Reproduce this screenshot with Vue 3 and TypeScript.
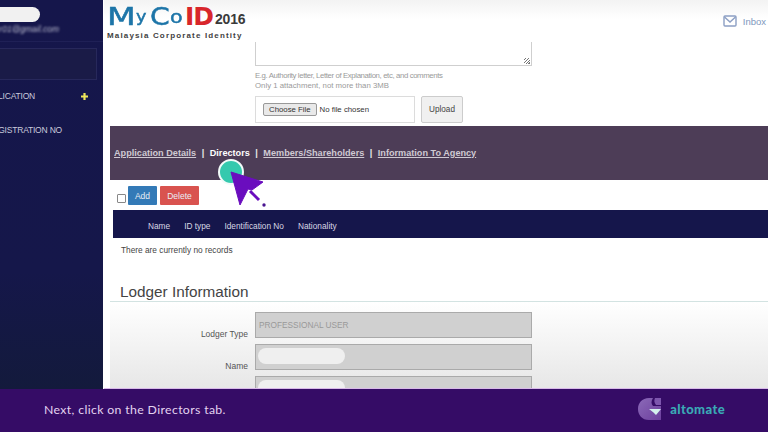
<script setup lang="ts">
const links = ['Application Details', 'Directors', 'Members/Shareholders', 'Information To Agency']
const columns = ['Name', 'ID type', 'Identification No', 'Nationality']
</script>

<template>
  <div class="screen">
    <div class="main">
      <aside class="sidebar">
        <div class="user">
          <div class="user-pill"></div>
          <div class="user-mail"><span>someuser01@gmail.com</span></div>
        </div>
        <div class="side-box"></div>
        <div class="side-row first">
          <div class="cut cut-a"><span>APPLICATION</span></div>
          <svg class="plus" width="7" height="7" viewBox="0 0 7 7"><path d="M3.500 0V7M0 3.500H7" stroke="#efe65a" stroke-width="2.200" /></svg>
        </div>
        <div class="side-row second"><div class="cut cut-b"><span>REGISTRATION NO</span></div></div>
      </aside>

      <section class="page">
        <header class="top">
          <div class="logo">
            <div class="logo-mark">
              <span class="m">M</span><span class="y">y</span><span class="c">C</span><span class="o">o</span><span class="id">ID</span><span class="year">2016</span>
            </div>
            <div class="logo-sub">Malaysia Corporate Identity</div>
          </div>
          <div class="inbox">
            <svg width="14" height="12" viewBox="0 0 14 12" fill="none" stroke="#8c9fc4" stroke-width="1.400">
              <rect x="1" y="1" width="12" height="10" rx="1" />
              <path d="M1.500 2 7 7 12.500 2" />
            </svg>
            <span>Inbox</span>
          </div>
        </header>

        <div class="upload">
          <div class="textarea"><span class="grip"></span></div>
          <p class="hint"><span class="hint-a">E.g. Authority letter, Letter of Explanation, etc, and comments</span><br />Only 1 attachment, not more than 3MB</p>
          <div class="file-row">
            <div class="file-box"><span class="choose">Choose File</span><span class="nofile">No file chosen</span></div>
            <div class="upload-btn">Upload</div>
          </div>
        </div>

        <nav class="tabs">
          <template v-for="(l, i) in links" :key="l">
            <span v-if="i" class="sep">|</span>
            <span :class="['tab', { active: l === 'Directors' }]">{{ l }}</span>
          </template>
        </nav>

        <div class="actions">
          <span class="check"></span>
          <span class="btn add">Add</span>
          <span class="btn del">Delete</span>
        </div>

        <div class="thead">
          <span v-for="c in columns" :key="c">{{ c }}</span>
        </div>
        <p class="empty">There are currently no records</p>

        <div class="lodger">
          <h2>Lodger Information</h2>
          <div class="form">
            <div class="row">
              <label>Lodger Type</label>
              <div class="field"><span class="value">PROFESSIONAL USER</span></div>
            </div>
            <div class="row">
              <label>Name</label>
              <div class="field"><span class="pill"></span></div>
            </div>
            <div class="row">
              <label></label>
              <div class="field"><span class="pill"></span></div>
            </div>
          </div>
        </div>
      </section>

      <svg class="cursor" width="50" height="50" viewBox="0 0 50 50">
        <circle cx="13" cy="14" r="12" fill="#35c9ae" stroke="#f2fbf9" stroke-width="2" />
        <path d="M13 14 45 24 34 32 30 31 22 47Z" fill="#6a0dbe" stroke="#6a0dbe" stroke-linejoin="round" />
        <path d="M32 33 41 42" stroke="#6a0dbe" stroke-width="3" />
        <circle cx="46" cy="47" r="1.700" fill="#4a1590" />
      </svg>
    </div>

    <footer class="bar">
      <span class="caption">Next, click on the Directors tab.</span>
      <div class="brand">
        <svg width="23" height="22" viewBox="0 0 23 22">
          <defs>
            <linearGradient id="g" x1="0" y1="0" x2="1" y2="1">
              <stop offset="0" stop-color="#8b6ab8" />
              <stop offset="1" stop-color="#6d3f9e" />
            </linearGradient>
          </defs>
          <path d="M11 0H15C13 3 13 6 15 8H23V22H11C4 22 0 17 0 11 0 5 4 0 11 0Z" fill="url(#g)" />
          <path d="M17 0H23V7H18C16 5 16 2 17 0Z" fill="#7d56ad" />
          <path d="M11 11 23 11 18 17 15.500 14.500Z" fill="#d5f0ee" />
        </svg>
        <span>altomate</span>
      </div>
    </footer>
  </div>
</template>

<style>
html, body { margin: 0; background: #fff; }
</style>

<style scoped>
.screen {
  width: 768px;
  height: 432px;
  overflow: hidden;
  display: flex;
  flex-direction: column;
  font-family: "Liberation Sans", Arial, sans-serif;
}
.main {
  position: relative;
  height: 389px;
  display: flex;
  overflow: hidden;
  filter: blur(0.35px);
}
.sidebar {
  width: 103px;
  flex: none;
  background: linear-gradient(#15164b, #15174a 70%, #131a3c);
  color: #c9cadb;
  overflow: hidden;
}
.user {
  height: 42px;
  padding-top: 7px;
  box-sizing: border-box;
  border-bottom: 1px solid #1f2056;
}
.user-pill {
  width: 40px;
  height: 15px;
  background: #f1f1f1;
  border-radius: 0 8px 8px 0;
}
.user-mail {
  display: flex;
  justify-content: flex-end;
  width: 59px;
  margin-top: 1px;
  font-size: 8.500px;
  line-height: 12px;
  color: #b9bacd;
  font-style: italic;
  filter: blur(1px);
  white-space: nowrap;
}
.side-box {
  width: 96px;
  height: 30px;
  margin-top: 6px;
  background: #1a1b47;
  border: 1px solid #27285b;
  border-left: 0;
}
.side-row {
  display: flex;
  align-items: center;
  justify-content: space-between;
  font-size: 8.500px;
  letter-spacing: -0.2px;
  white-space: nowrap;
  height: 12px;
}
.cut { display: flex; justify-content: flex-end; }
.cut-a { width: 35px; }
.cut-b { width: 62px; }
.first { margin-top: 10px; padding-right: 15px; }
.second { margin-top: 22px; }

.page {
  flex: 1;
  min-width: 0;
  margin-left: 1px;
  background: #fff;
  overflow: hidden;
  border-bottom: 1px solid #d9b9ea;
}
.top {
  height: 42px;
  display: flex;
  justify-content: space-between;
  background: linear-gradient(#f3f3f3, #fff 45%);
}
.logo { padding: 6px 0 0 3px; }
.logo-mark {
  display: flex;
  align-items: flex-end;
  height: 22px;
  font-family: "DejaVu Sans", sans-serif;
  font-weight: 400;
  line-height: 22px;
  white-space: nowrap;
  color: #1d75a8;
  -webkit-text-stroke: 0.5px #1d75a8;
}
.m, .c { font-size: 25px; transform-origin: left; }
.m { width: 29px; transform: scaleX(1.330); }
.y { font-size: 16px; width: 14px; line-height: 22px; transform: scaleX(1.100); transform-origin: left; }
.c { width: 20px; transform: scaleX(1.130); }
.o { font-size: 18px; width: 15px; transform: scaleX(1.150); transform-origin: left; }
.id {
  color: #d8262b;
  -webkit-text-stroke: 0;
  font-size: 25px;
  font-weight: 700;
  width: 30px;
  letter-spacing: -1px;
}
.year {
  color: #3a3a3a;
  -webkit-text-stroke: 0;
  line-height: 18px;
  font-weight: 700;
  letter-spacing: -0.2px;
  font-family: "Liberation Sans", sans-serif;
  font-size: 14px;
}
.logo-sub {
  margin-top: 3px;
  font-size: 8px;
  line-height: 10px;
  font-weight: 700;
  letter-spacing: 1.150px;
  color: #3f3f3f;
  white-space: nowrap;
}
.inbox {
  display: flex;
  align-items: center;
  gap: 6px;
  height: 12px;
  margin-top: 15px;
  margin-right: 2px;
  font-size: 9.500px;
  color: #7e97bd;
}

.upload { padding-left: 151px; }
.textarea {
  position: relative;
  width: 275px;
  height: 23px;
  border: 1px solid #cfcfcf;
  border-top: 0;
}
.grip {
  position: absolute;
  right: 1px;
  bottom: 1px;
  width: 6px;
  height: 6px;
  background: repeating-linear-gradient(135deg, transparent 0 1px, #777 1px 2px);
}
.hint {
  margin: 5px 0 0;
  font-size: 7.800px;
  line-height: 9.500px;
  color: #9a9a9a;
  white-space: nowrap;
}
.hint-a { letter-spacing: -0.380px; }
.file-row { display: flex; gap: 6px; margin-top: 6px; }
.file-box {
  width: 151px;
  height: 25px;
  border: 1px solid #dcdcdc;
  display: flex;
  align-items: center;
  padding-left: 7px;
  font-size: 7.800px;
  color: #333;
}
.choose {
  background: #e9e9e9;
  border: 1px solid #999;
  border-radius: 2px;
  padding: 1px 5px;
  margin-right: 3px;
}
.upload-btn {
  width: 40px;
  height: 25px;
  background: #f0f0f0;
  border: 1px solid #ccc;
  border-radius: 2px;
  display: flex;
  align-items: center;
  justify-content: center;
  font-size: 8.200px;
  color: #444;
}

.tabs {
  margin: 3px 0 0 6px;
  height: 54px;
  box-sizing: border-box;
  background: #4d3d57;
  display: flex;
  align-items: center;
  padding: 0 0 1px 4px;
  gap: 4.500px;
  font-size: 9.150px;
  color: #e8e8e8;
  white-space: nowrap;
}
.tab { text-decoration: underline; color: #cfc9d2; font-weight: 700; }
.tab.active { text-decoration: none; color: #fff; }
.sep { color: #e8e8e8; margin: 0 1px; font-weight: 700; }

.actions {
  display: flex;
  align-items: flex-start;
  height: 30px;
  padding: 6px 0 0 13px;
  box-sizing: border-box;
  font-size: 8.500px;
}
.check {
  width: 7px;
  height: 7px;
  border: 1px solid #888;
  border-radius: 1px;
  margin: 8px 2px 0 0;
}
.btn {
  height: 19px;
  display: flex;
  align-items: center;
  justify-content: center;
  color: #e9eef5;
  border-radius: 1px;
}
.add { width: 29px; background: #337ab7; margin-right: 3px; }
.del { width: 39px; background: #d9534f; }

.thead {
  margin-left: 9px;
  height: 28px;
  box-sizing: border-box;
  padding: 3px 0 0 35px;
  background: #15164b;
  display: flex;
  align-items: center;
  gap: 14px;
  font-size: 8.300px;
  color: #d8d8e4;
  white-space: nowrap;
}
.empty {
  margin: 7px 0 0 17px;
  font-size: 8.300px;
  line-height: 11px;
  color: #444;
}

.lodger { margin: 27px 0 0 6px; }
h2 {
  margin: 0;
  padding: 0 0 0 10px;
  font-size: 15.300px;
  font-weight: 400;
  line-height: 18px;
  height: 18px;
  color: #444;
  border-bottom: 1px solid #d3e3e2;
}
.form {
  background: linear-gradient(#fff, #e3e3e3);
  padding-top: 10px;
  height: 90px;
  display: flex;
  flex-direction: column;
  gap: 6px;
}
.row { display: flex; gap: 7px; flex: none; }
label {
  width: 138px;
  text-align: right;
  align-self: flex-end;
  margin-bottom: -2px;
  font-size: 8.500px;
  line-height: 11px;
  color: #555;
}
.field {
  width: 273px;
  height: 24px;
  background: #d0d0d0;
  border: 1px solid #aaa;
  display: flex;
  align-items: center;
  padding-left: 2px;
  flex: none;
}
.value { font-size: 8.300px; color: #999; padding-left: 1px; }
.pill {
  width: 87px;
  height: 16px;
  background: #efefef;
  border-radius: 8px;
  margin-top: -3px;
}

.cursor {
  position: absolute;
  left: 218px;
  top: 158px;
  overflow: visible;
}

.bar {
  flex: none;
  height: 43px;
  background: #350c66;
  box-sizing: border-box;
  display: flex;
  align-items: center;
  justify-content: space-between;
  padding: 0 43px 3px 44px;
  color: #e3d3f0;
}
.caption {
  font-family: Lato, sans-serif;
  font-size: 12.300px;
  letter-spacing: 0.350px;
}
.brand {
  display: flex;
  align-items: center;
  gap: 9px;
  color: #3aa9b5;
  font-family: Lato, sans-serif;
  font-weight: 900;
  font-size: 13px;
  letter-spacing: 0.400px;
}
</style>
